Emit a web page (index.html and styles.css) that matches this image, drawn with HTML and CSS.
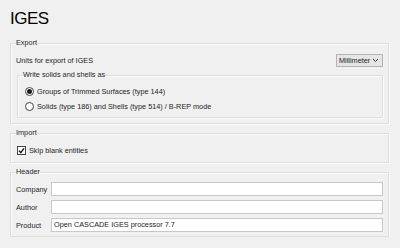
FILE: index.html
```html
<!DOCTYPE html>
<html lang="en">
<head>
    <meta charset="UTF-8">
    <title>IGES</title>
    <link rel="stylesheet" href="styles.css">
</head>
<body>
    <h1>IGES</h1>

    <fieldset class="group">
        <legend>Export</legend>
        <div class="units-row">
            <span>Units for export of IGES</span>
            <div class="combo">
                <span>Millimeter</span>
                <svg width="7" height="5" viewBox="0 0 7 5"><polyline points="1,1 3.5,3.5 6,1" fill="none" stroke="#333" stroke-width="1"/></svg>
            </div>
        </div>
        <fieldset class="group inner">
            <legend>Write solids and shells as</legend>
            <div class="option">
                <span class="radio checked"></span>
                <span>Groups of Trimmed Surfaces (type 144)</span>
            </div>
            <div class="option">
                <span class="radio"></span>
                <span>Solids (type 186) and Shells (type 514) / B-REP mode</span>
            </div>
        </fieldset>
    </fieldset>

    <fieldset class="group import">
        <legend>Import</legend>
        <div class="option check-row">
            <span class="checkbox">
                <svg width="7" height="7" viewBox="0 0 7 7"><polyline points="1,3.6 2.8,5.6 6,1.4" fill="none" stroke="#111" stroke-width="1.4"/></svg>
            </span>
            <span>Skip blank entities</span>
        </div>
    </fieldset>

    <fieldset class="group header">
        <legend>Header</legend>
        <div class="fields">
            <label>Company</label>
            <div class="field"></div>
            <label>Author</label>
            <div class="field"></div>
            <label>Product</label>
            <div class="field">Open CASCADE IGES processor 7.7</div>
        </div>
    </fieldset>
</body>
</html>
```

FILE: styles.css
```css
body {
    margin: 0;
    padding: 8px 11px 0 10px;
    background-color: #f0f0f0;
    font-family: "Liberation Sans", Arial, sans-serif;
    font-size: 7.3px;
    color: #1e1e1e;
}
h1 {
    margin: 0 0 8px;
    font-size: 17px;
    line-height: 22px;
    font-weight: normal;
    letter-spacing: -0.5px;
    color: #000;
}
.group {
    margin: 0;
    min-width: 0;
    padding: 4px 5px 5px 5px;
    border: 1px solid #dedede;
    box-shadow: inset 1px 1px 0 #fafafa, 1px 1px 0 #fafafa;
}
.group legend {
    padding: 0;
    height: 10px;
    line-height: 10px;
}
.units-row {
    display: flex;
    justify-content: space-between;
    align-items: center;
    height: 16px;
}
.combo {
    box-sizing: border-box;
    width: 47px;
    height: 13px;
    display: flex;
    align-items: center;
    justify-content: space-between;
    padding: 0 3px 0 2px;
    border: 1px solid #b4b4b4;
    background-color: #e5e5e5;
}
.inner {
    margin: 2px 0 0 1px;
    padding: 4px 5px 3px 5px;
}
.option {
    display: flex;
    align-items: center;
    gap: 3px;
    height: 15px;
    margin-left: 2px;
}
.radio {
    box-sizing: border-box;
    width: 9px;
    height: 9px;
    border: 1px solid #444;
    border-radius: 50%;
    background-color: #fff;
    display: flex;
    align-items: center;
    justify-content: center;
}
.radio.checked::after {
    content: "";
    width: 5px;
    height: 5px;
    border-radius: 50%;
    background-color: #1a1a1a;
}
.import {
    margin-top: 4px;
    padding: 4px 5px 4px 5px;
}
.check-row {
    height: 16px;
    margin-left: 1px;
}
.checkbox {
    box-sizing: border-box;
    width: 9px;
    height: 9px;
    border: 1px solid #444;
    background-color: #fff;
    display: flex;
    align-items: center;
    justify-content: center;
}
.header {
    margin-top: 4px;
    padding: 5px 5px 4px 5px;
}
.fields {
    display: grid;
    grid-template-columns: 35px 1fr;
    row-gap: 4px;
    align-items: center;
}
.field {
    box-sizing: border-box;
    height: 14px;
    line-height: 12px;
    padding-left: 2px;
    border: 1px solid #c8c8c8;
    background-color: #fff;
}
```
